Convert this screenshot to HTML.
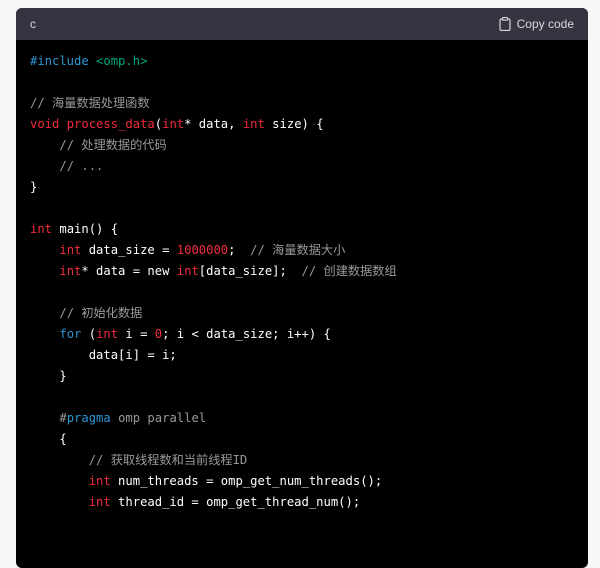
<!DOCTYPE html>
<html><head><meta charset="utf-8"><style>
html,body{margin:0;padding:0;background:#f7f7f8;width:600px;height:527px;overflow:hidden}
.blk{position:absolute;left:16px;top:8px;width:572px;height:560px;background:#000;border-radius:6px;overflow:hidden}
.hd{height:32px;background:#343541;color:#d9d9e3;font:12px "Liberation Sans",sans-serif;position:relative}
.hd .l{position:absolute;left:14px;top:9px}
.hd .r{position:absolute;right:14px;top:9px;display:flex;align-items:center;gap:6px}
pre{margin:0;padding:11px 0 0 14px;font:12.2px/21px "DejaVu Sans Mono","Noto Sans CJK SC",monospace;color:#fff}
.k{color:#f22c3d}.b{color:#2e95d3}.g{color:#00a67d}.c{color:#999}
</style></head><body>
<div class="blk">
<div class="hd"><span class="l">c</span><span class="r"><svg width="12" height="14" viewBox="0 0 12 14"><rect x="1" y="2" width="10" height="11.5" rx="1.5" fill="none" stroke="#d9d9e3" stroke-width="1.2"/><rect x="3.5" y="0.6" width="5" height="2.6" rx="0.8" fill="#343541" stroke="#d9d9e3" stroke-width="1.1"/></svg>Copy code</span></div>
<pre><span class="b">#include</span> <span class="g">&lt;omp.h&gt;</span>

<span class="c">// 海量数据处理函数</span>
<span class="k">void</span> <span class="k">process_data</span>(<span class="k">int</span>* data, <span class="k">int</span> size) {
    <span class="c">// 处理数据的代码</span>
    <span class="c">// ...</span>
}

<span class="k">int</span> main() {
    <span class="k">int</span> data_size = <span class="k">1000000</span>;  <span class="c">// 海量数据大小</span>
    <span class="k">int</span>* data = new <span class="k">int</span>[data_size];  <span class="c">// 创建数据数组</span>

    <span class="c">// 初始化数据</span>
    <span class="b">for</span> (<span class="k">int</span> i = <span class="k">0</span>; i &lt; data_size; i++) {
        data[i] = i;
    }

    <span class="c">#</span><span class="b">pragma</span> <span class="c">omp parallel</span>
    {
        <span class="c">// 获取线程数和当前线程ID</span>
        <span class="k">int</span> num_threads = omp_get_num_threads();
        <span class="k">int</span> thread_id = omp_get_thread_num();
</pre>
</div>
</body></html>
